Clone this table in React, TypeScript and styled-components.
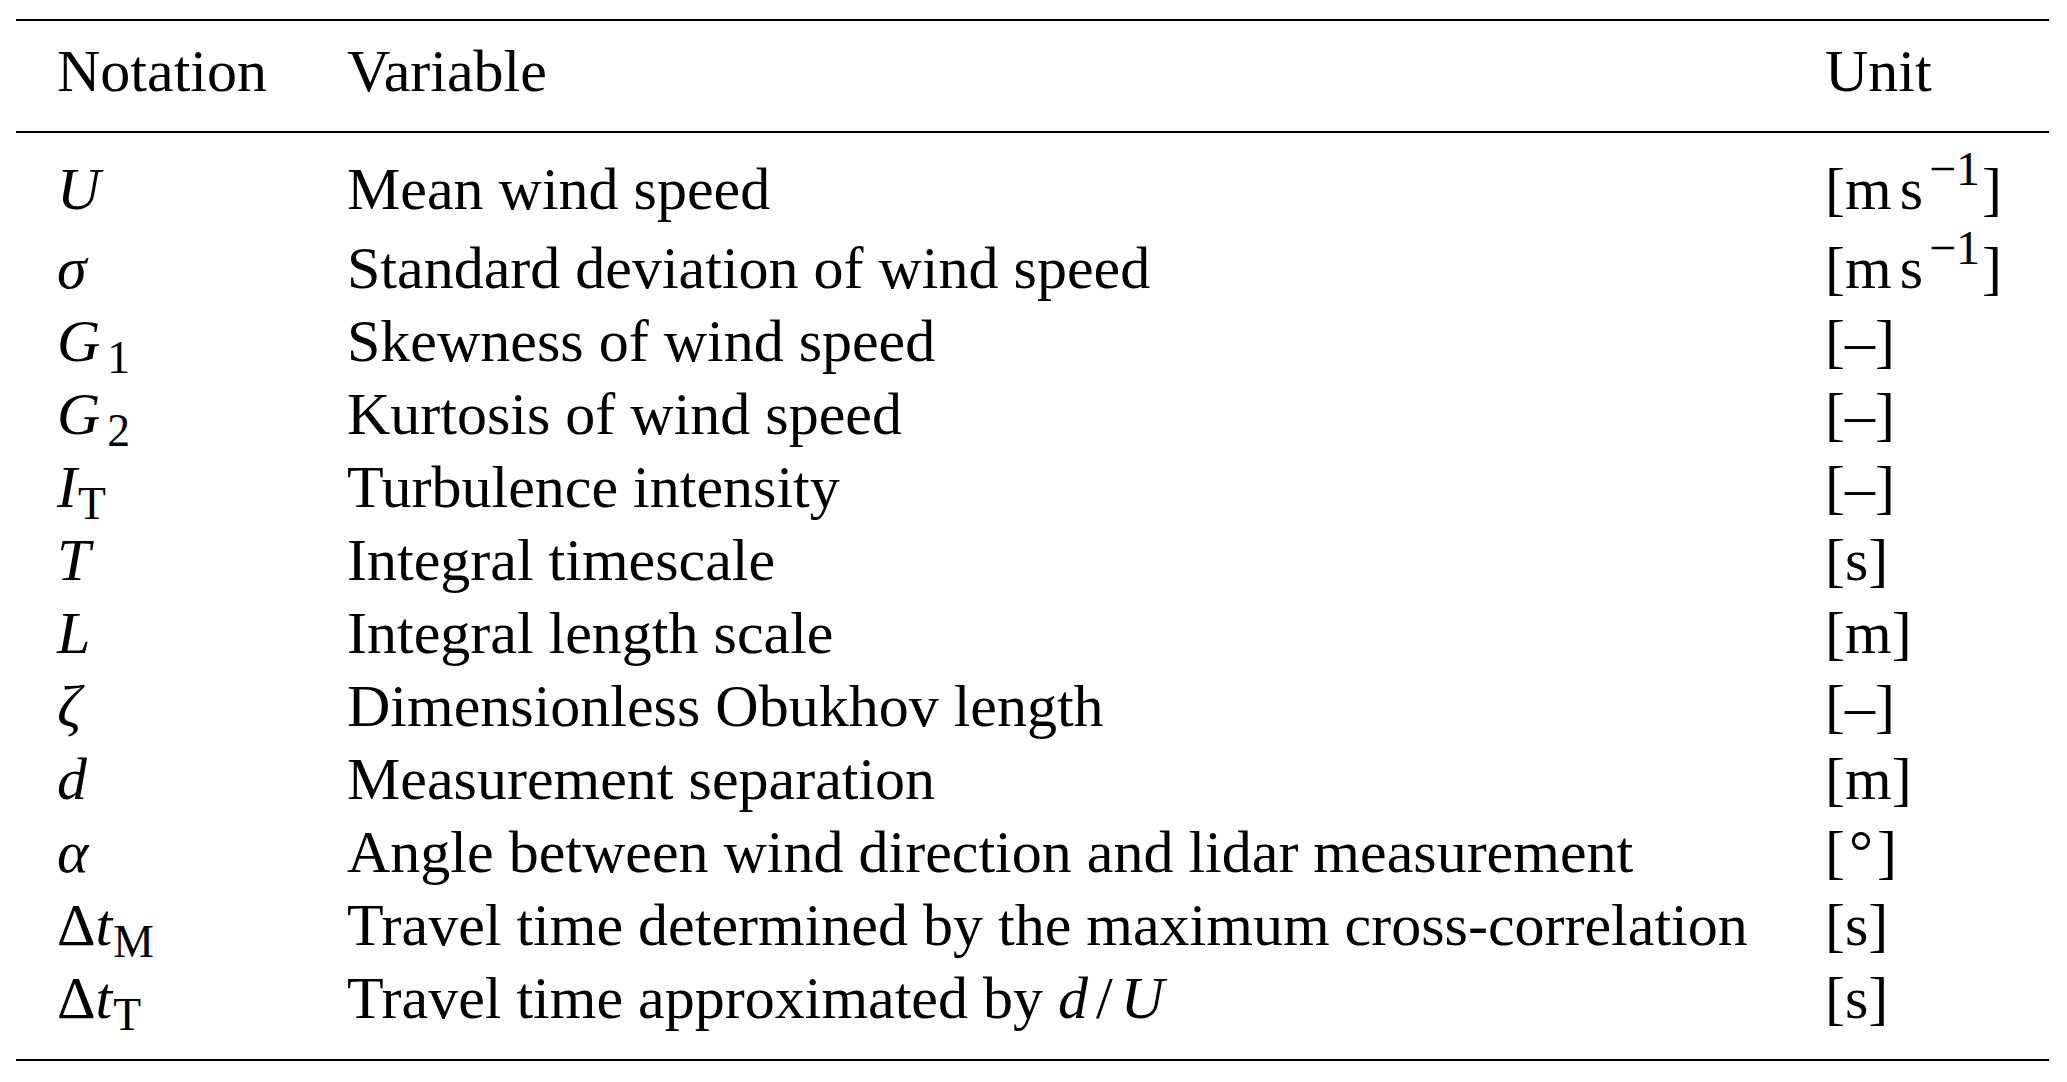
import React from "react";
import styled, { createGlobalStyle } from "styled-components";

const GlobalStyle = createGlobalStyle`
  html, body {
    margin: 0;
    padding: 0;
    background: #ffffff;
  }
  body {
    font-family: "Liberation Serif", "Times New Roman", serif;
    color: #000000;
  }
`;

const Page = styled.div`
  width: 2067px;
  height: 1082px;
  padding-top: 19px;
  padding-left: 16px;
  box-sizing: border-box;
  background: #ffffff;
`;

const Table = styled.div`
  width: 2033px;
  border-top: 2.5px solid #000;
  border-bottom: 2.5px solid #000;
  font-size: 60px;
  line-height: 73px;
`;

const Row = styled.div<{ $raised?: boolean }>`
  display: grid;
  grid-template-columns: 290px 1478px auto;
  padding-left: 41px;
  padding-top: ${(p) => (p.$raised ? "6px" : "0")};
  white-space: nowrap;
`;

const HeadRow = styled(Row)`
  padding-top: 14px;
  padding-bottom: 23px;
  border-bottom: 2.5px solid #000;
`;

const Body = styled.div`
  padding-top: 14px;
  padding-bottom: 24px;
`;

const Cell = styled.div`
  display: block;
`;

const MathVar = styled.span`
  font-style: italic;
`;

const Sub = styled.span<{ $gap?: number }>`
  font-size: 0.76em;
  line-height: 0;
  vertical-align: -12px;
  margin-left: ${(p) => p.$gap ?? 2}px;
`;

const Sup = styled.span`
  font-size: 0.8em;
  line-height: 0;
  vertical-align: 24px;
  margin-left: 6px;
  margin-right: 2px;
`;

const Thin = styled.span<{ $w?: number }>`
  display: inline-block;
  width: ${(p) => p.$w ?? 8}px;
`;

type Entry = {
  notation: React.ReactNode;
  variable: React.ReactNode;
  unit: React.ReactNode;
  raised?: boolean;
};

const msInv = (
  <>
    [m<Thin />s<Sup>−1</Sup>]
  </>
);

const entries: Entry[] = [
  { notation: <MathVar>U</MathVar>, variable: "Mean wind speed", unit: msInv, raised: true },
  { notation: <MathVar>σ</MathVar>, variable: "Standard deviation of wind speed", unit: msInv, raised: true },
  {
    notation: (
      <>
        <MathVar>G</MathVar>
        <Sub $gap={7}>1</Sub>
      </>
    ),
    variable: "Skewness of wind speed",
    unit: "[–]",
  },
  {
    notation: (
      <>
        <MathVar>G</MathVar>
        <Sub $gap={7}>2</Sub>
      </>
    ),
    variable: "Kurtosis of wind speed",
    unit: "[–]",
  },
  {
    notation: (
      <>
        <MathVar>I</MathVar>
        <Sub $gap={1}>T</Sub>
      </>
    ),
    variable: "Turbulence intensity",
    unit: "[–]",
  },
  { notation: <MathVar>T</MathVar>, variable: "Integral timescale", unit: "[s]" },
  { notation: <MathVar>L</MathVar>, variable: "Integral length scale", unit: "[m]" },
  { notation: <MathVar>ζ</MathVar>, variable: "Dimensionless Obukhov length", unit: "[–]" },
  { notation: <MathVar>d</MathVar>, variable: "Measurement separation", unit: "[m]" },
  {
    notation: <MathVar>α</MathVar>,
    variable: "Angle between wind direction and lidar measurement",
    unit: (
      <>
        [<Thin $w={4} />°<Thin $w={4} />]
      </>
    ),
  },
  {
    notation: (
      <>
        Δ<MathVar>t</MathVar>
        <Sub $gap={1}>M</Sub>
      </>
    ),
    variable: "Travel time determined by the maximum cross-correlation",
    unit: "[s]",
  },
  {
    notation: (
      <>
        Δ<MathVar>t</MathVar>
        <Sub $gap={1}>T</Sub>
      </>
    ),
    variable: (
      <>
        Travel time approximated by <MathVar>d</MathVar>
        <Thin $w={8} />/<Thin $w={8} />
        <MathVar>U</MathVar>
      </>
    ),
    unit: "[s]",
  },
];

export default function App() {
  return (
    <>
      <GlobalStyle />
      <Page>
        <Table>
          <HeadRow>
            <Cell>Notation</Cell>
            <Cell>Variable</Cell>
            <Cell>Unit</Cell>
          </HeadRow>
          <Body>
            {entries.map((e, i) => (
              <Row key={i} $raised={e.raised}>
                <Cell>{e.notation}</Cell>
                <Cell>{e.variable}</Cell>
                <Cell>{e.unit}</Cell>
              </Row>
            ))}
          </Body>
        </Table>
      </Page>
    </>
  );
}
